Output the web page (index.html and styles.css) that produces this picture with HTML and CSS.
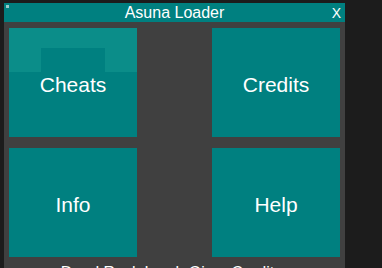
FILE: index.html
```html
<!DOCTYPE html>
<html>
<head>
<meta charset="utf-8">
<link rel="stylesheet" href="styles.css">
</head>
<body>
<div class="window">
  <div class="titlebar">
    <span class="app-icon"></span>
    <span class="title">Asuna Loader</span>
    <span class="close">X</span>
  </div>
  <div class="content">
    <div class="grid">
      <div class="tile hover"><span>Cheats</span></div>
      <div class="tile"><span>Credits</span></div>
      <div class="tile"><span>Info</span></div>
      <div class="tile"><span>Help</span></div>
    </div>
    <div class="footer">Dead Rock Lamb Giver Credits</div>
  </div>
</div>
</body>
</html>
```
FILE: styles.css
```css
html, body {
  margin: 0;
  padding: 0;
  background: #1c1c1c;
  overflow: hidden;
  height: 268px;
}
body {
  padding: 3px 0 0 4px;
  font-family: "Liberation Sans", Arial, sans-serif;
  color: #ffffff;
}
.window {
  width: 341px;
  height: 300px;
  background: #404040;
}
.titlebar {
  position: relative;
  height: 19px;
  background: #008080;
  display: flex;
  align-items: center;
  justify-content: center;
}
.app-icon {
  position: absolute;
  left: 2px;
  top: 2px;
  width: 3px;
  height: 3px;
  background: #9cc9c7;
}
.title {
  font-size: 16px;
  line-height: 19px;
  margin-top: -1px;
}
.close {
  position: absolute;
  right: 4px;
  top: 1px;
  font-size: 14px;
  line-height: 19px;
}
.content {
  padding: 6px 5px 0 5px;
}
.grid {
  display: grid;
  grid-template-columns: 128px 128px;
  grid-template-rows: 109px 109px;
  column-gap: 75px;
  row-gap: 11px;
}
.tile {
  position: relative;
  background: #008080;
  display: flex;
  align-items: center;
  justify-content: center;
  font-size: 21px;
}
.tile span {
  position: relative;
  z-index: 2;
  top: 2px;
}
.tile.hover::before {
  content: "";
  position: absolute;
  left: 0;
  top: 0;
  width: 128px;
  height: 44px;
  background: #0b8d89;
}
.tile.hover::after {
  content: "";
  position: absolute;
  left: 32px;
  top: 20px;
  width: 64px;
  height: 24px;
  background: #008080;
}
.footer {
  margin-top: 7px;
  text-align: center;
  font-size: 16px;
  line-height: 18px;
  padding-right: 6px;
}
```
